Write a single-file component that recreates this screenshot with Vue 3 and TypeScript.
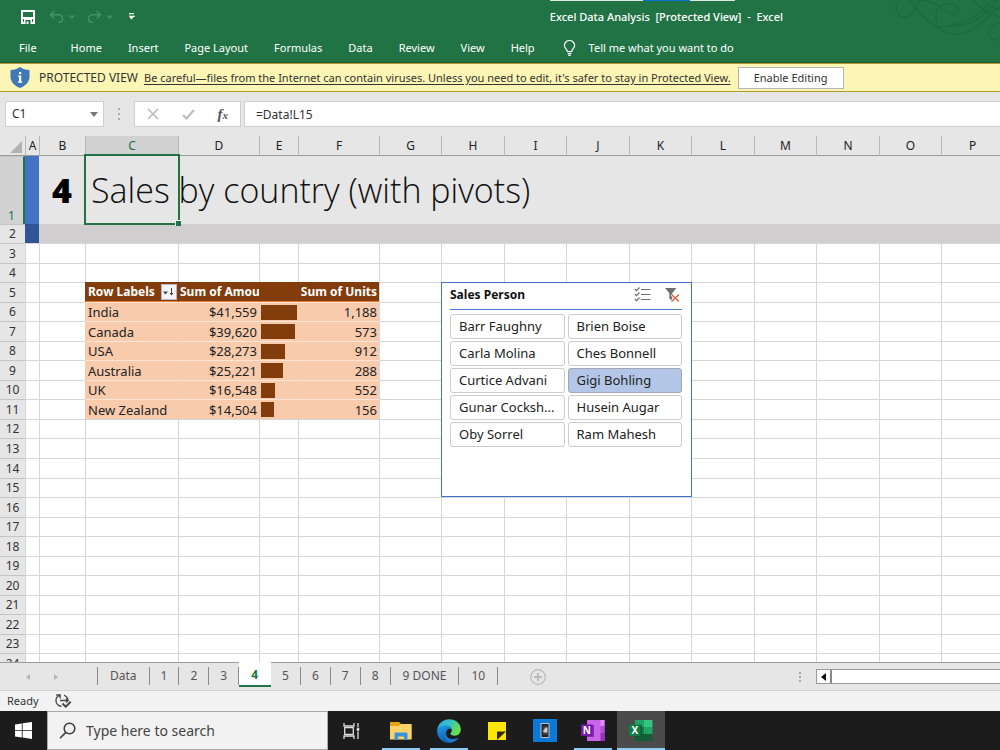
<script setup lang="ts">
import { ref } from 'vue'

interface Column { id: string; width: number }
interface PivotRow { country: string; amount: number; units: number }

const menus: string[] = ['File', 'Home', 'Insert', 'Page Layout', 'Formulas', 'Data', 'Review', 'View', 'Help']

const columns: Column[] = [
  { id: 'A', width: 14 }, { id: 'B', width: 46 }, { id: 'C', width: 93 }, { id: 'D', width: 81 },
  { id: 'E', width: 39 }, { id: 'F', width: 81 }, { id: 'G', width: 62 }, { id: 'H', width: 63 },
  { id: 'I', width: 62 }, { id: 'J', width: 63 }, { id: 'K', width: 62 }, { id: 'L', width: 63 },
  { id: 'M', width: 62 }, { id: 'N', width: 63 }, { id: 'O', width: 62 }, { id: 'P', width: 63 },
]
const sheetWidth = columns.reduce((sum, c) => sum + c.width, 25)

const pivot: PivotRow[] = [
  { country: 'India', amount: 41559, units: 1188 },
  { country: 'Canada', amount: 39620, units: 573 },
  { country: 'USA', amount: 28273, units: 912 },
  { country: 'Australia', amount: 25221, units: 288 },
  { country: 'UK', amount: 16548, units: 552 },
  { country: 'New Zealand', amount: 14504, units: 156 },
]
const topAmount = Math.max(...pivot.map((r) => r.amount))

const FIRST_PIVOT_ROW = 6
const rows: number[] = Array.from({ length: 24 }, (_, i) => i + 1)

function rowHeight(n: number): number {
  if (n === 1) return 68
  if (n === 2) return 19
  return ((n - 3) % 11) % 2 === 0 ? 20 : 19
}
function pivotAt(n: number): PivotRow | undefined {
  return pivot[n - FIRST_PIVOT_ROW]
}
function cellClass(n: number, id: string): string[] {
  const inPivot = 'CDEF'.includes(id)
  if (n === 5 && inPivot) return ['phead', 'p' + id]
  if (pivotAt(n) && inPivot) return ['pcell', 'p' + id]
  if (n <= 2 && id === 'A') return ['accent']
  return []
}
const fmt = (v: number): string => v.toLocaleString('en-US')

const people: string[] = [
  'Barr Faughny', 'Brien Boise', 'Carla Molina', 'Ches Bonnell', 'Curtice Advani',
  'Gigi Bohling', 'Gunar Cocksh...', 'Husein Augar', 'Oby Sorrel', 'Ram Mahesh',
]
const person = ref('Gigi Bohling')

const sheets: string[] = ['Data', '1', '2', '3', '4', '5', '6', '7', '8', '9 DONE', '10']
const sheet = ref('4')
const formula = ref('=Data!L15')
const search = ref('')
</script>

<template>
  <div class="app">
    <header class="ribbon">
      <svg class="flourish" width="115" height="44" viewBox="0 0 115 44" fill="none" stroke="#1d6a40" stroke-width="1.300" aria-hidden="true">
        <path d="M14 2c-4 3-4 13 3 15 8 2 12-6 18-17M22 0c5 1 8 6 11 10 7 9 20 20 32 24 10 2 20-2 29-9 8-6 14-13 21-19" />
        <path d="M66 15c5 1 8-2 8-5 0-4-5-6-11-6C54 4 51 10 51 15c0 5 1 10 2 12 16-1 30-5 40-13 6-5 10-9 15-14" />
        <path d="M36 0c10 0 16 6 24 11 6 3 12 0 11-4M66 26c12 0 22-3 30-9 6-5 12-11 17-17M88 0c5 7 12 12 27 17M98 0c4 5 9 8 17 10M115 22c-7 2-11 7-11 12 1 7 9 8 10 2" />
      </svg>
      <div class="strip" aria-hidden="true"><i></i></div>
      <div class="titlebar">
        <div class="quick">
          <button class="ic save" aria-label="Save">
            <svg width="14" height="14" viewBox="0 0 14 14"><path d="M1 1h12v12H1z" fill="none" stroke="#fff" stroke-width="2" /><path d="M1 7h12v2H1zM3 9h8v5H3z" fill="#fff" /><path d="M4.500 10h5v4h-5z" fill="#217346" /><path d="M5.500 11.500h2V14h-2z" fill="#fff" /></svg>
          </button>
          <button class="ic undo" aria-label="Undo">
            <svg width="28" height="14" viewBox="0 0 28 14" fill="none" stroke="#478f69" stroke-width="1.600"><path d="M5.500 1L1.500 4.700l4 3.800M2 4.700h7c3 0 4.500 2 4.500 4s-1.500 3.600-4.500 3.800" /><path d="M20.500 5.500l2.300 2.300 2.300-2.300" /></svg>
          </button>
          <button class="ic redo" aria-label="Redo">
            <svg width="28" height="14" viewBox="0 0 28 14" fill="none" stroke="#478f69" stroke-width="1.600"><path d="M9.500 1l4 3.700-4 3.800M13 4.700H6c-3 0-4.500 2-4.500 4s1.500 3.600 4.500 3.800" /><path d="M20.500 5.500l2.300 2.300 2.300-2.300" /></svg>
          </button>
          <button class="ic more" aria-label="Customize Quick Access Toolbar">
            <svg width="7" height="8" viewBox="0 0 7 8" fill="#fff"><path d="M1 0h5v1.200H1zM0 2.800h7v1H3.500zM.8 3.500h5.400L3.500 6.500z" /></svg>
          </button>
        </div>
        <h1>Excel Data Analysis&nbsp; [Protected View]&nbsp; -&nbsp; Excel</h1>
      </div>
      <nav class="menu">
        <button v-for="m in menus" :key="m" :class="{ file: m === 'File' }">{{ m }}</button>
        <button class="tell">
          <svg width="13" height="16" viewBox="0 0 13 16" fill="none" stroke="#fff" stroke-width="1.200"><path d="M4.300 11.500C4.300 9 1.400 8.500 1.400 5.500a5.100 5 0 0 1 10.200 0c0 3-2.900 3.500-2.900 6zM4.600 13.300h3.800M5 15.200h3" /></svg>
          <span>Tell me what you want to do</span>
        </button>
      </nav>
    </header>

    <section class="notice">
      <svg width="20" height="21" viewBox="0 0 20 21"><path d="M10 0c2.500 2 6 3 9.500 3v7c0 5-4.500 9-9.500 11C5 19 .5 15 .5 10V3C4 3 7.500 2 10 0z" fill="#4179b8" /><path d="M9 5h2.200v2.200H9zM8.200 8.500h3v6h1v1.300H8v-1.300h1V9.700h-.8z" fill="#fff" /></svg>
      <span class="cap">PROTECTED VIEW</span>
      <a href="#">Be careful—files from the Internet can contain viruses. Unless you need to edit, it's safer to stay in Protected View.</a>
      <button>Enable Editing</button>
    </section>

    <section class="fbar">
      <button class="namebox" aria-label="Name box">
        <span>C1</span>
        <svg width="8" height="5" viewBox="0 0 8 5"><path d="M0 0h8L4 5z" fill="#777" /></svg>
      </button>
      <svg class="dots" width="3" height="12" viewBox="0 0 3 12" fill="#aaa"><path d="M0 0h2v2H0zM0 5h2v2H0zM0 10h2v2H0z" /></svg>
      <div class="fx">
        <svg width="12" height="12" viewBox="0 0 12 12" fill="none" stroke="#bdbdbd" stroke-width="1.700"><path d="M1 1l10 10M11 1L1 11" /></svg>
        <svg width="13" height="11" viewBox="0 0 13 11" fill="none" stroke="#bdbdbd" stroke-width="2.200"><path d="M1 6l3.500 3.500L12 1" /></svg>
        <span class="fxt">f<small>x</small></span>
      </div>
      <input v-model="formula" class="formula" aria-label="Formula" readonly />
    </section>

    <main class="sheet">
      <table :style="{ minWidth: sheetWidth + 'px' }">
        <colgroup>
          <col :style="{ width: '25px' }" />
          <col v-for="(c, i) in columns" :key="c.id" :style="i < columns.length - 1 ? { width: c.width + 'px' } : {}" />
        </colgroup>
        <thead>
          <tr>
            <th class="corner"><svg width="12" height="12" viewBox="0 0 12 12"><path d="M12 0v12H0z" fill="#b2b2b2" /></svg></th>
            <th v-for="c in columns" :key="c.id" scope="col" :class="{ on: c.id === 'C' }">{{ c.id }}</th>
          </tr>
        </thead>
        <tbody>
          <tr v-for="n in rows" :key="n" :class="'r' + n" :style="{ height: rowHeight(n) + 'px' }">
            <th scope="row" :class="{ on: n === 1 }">{{ n }}</th>
            <td v-for="c in columns" :key="c.id" :class="cellClass(n, c.id)">
              <b v-if="n === 1 && c.id === 'B'" class="num">4</b>
              <div v-else-if="n === 1 && c.id === 'C'" class="anchor big">
                <span class="title">Sales by country (with pivots)</span>
                <i class="select"></i>
              </div>
              <template v-else-if="n === 5">
                <div v-if="c.id === 'C'" class="filter">
                  <span>Row Labels</span>
                  <button aria-label="Sort Row Labels"><svg width="12" height="10" viewBox="0 0 12 10"><path d="M0 4.500h5L2.500 7.500zM8 1h1v5h1.500L8.500 8.500 6.500 6H8z" fill="#444" /></svg></button>
                </div>
                <template v-else-if="c.id === 'D'">Sum of Amount</template>
                <template v-else-if="c.id === 'F'">Sum of Units</template>
                <div v-else-if="c.id === 'H'" class="anchor">
                  <section class="slicer">
                    <header>
                      <h2>Sales Person</h2>
                      <button aria-label="Multi-Select">
                        <svg width="17" height="15" viewBox="0 0 17 15" fill="none" stroke="#6e6e6e" stroke-width="1.200"><path d="M7 2.500h9.500M7 7.500h9.500M7 12.500h9.500M.8 2l1.700 1.700L5.500.5M.8 7l1.700 1.700 3-3.200M.8 12l1.700 1.700 3-3.200" /></svg>
                      </button>
                      <button aria-label="Clear Filter">
                        <svg width="15" height="16" viewBox="0 0 15 16"><path d="M0 1h11.500L7.300 6v8L4.300 11.500V6z" fill="#6e6e6e" /><path d="M6.500 7.500l7.500 7M14 7.500l-7.500 7" stroke="#fff" stroke-width="3" /><path d="M6.500 7.500l7.500 7M14 7.500l-7.500 7" stroke="#e0603f" stroke-width="1.500" /></svg>
                      </button>
                    </header>
                    <div class="people">
                      <button v-for="p in people" :key="p" :class="{ on: p === person }" @click="person = p">{{ p }}</button>
                    </div>
                  </section>
                </div>
              </template>
              <template v-else-if="pivotAt(n)">
                <template v-if="c.id === 'C'">{{ pivotAt(n)!.country }}</template>
                <template v-else-if="c.id === 'D'">${{ fmt(pivotAt(n)!.amount) }}</template>
                <div v-else-if="c.id === 'E'" class="bar" :style="{ width: (pivotAt(n)!.amount / topAmount) * 100 + '%' }"></div>
                <template v-else-if="c.id === 'F'">{{ fmt(pivotAt(n)!.units) }}</template>
              </template>
            </td>
          </tr>
        </tbody>
      </table>
    </main>

    <footer class="tabs">
      <div class="arrows">
        <button aria-label="Previous sheet"><svg width="4" height="6" viewBox="0 0 4 6"><path d="M4 0v6L0 3z" fill="#b5b5b5" /></svg></button>
        <button aria-label="Next sheet"><svg width="4" height="6" viewBox="0 0 4 6"><path d="M0 0v6l4-3z" fill="#b5b5b5" /></svg></button>
      </div>
      <nav>
        <button v-for="s in sheets" :key="s" :class="{ on: s === sheet, wide: s.length > 1 }" @click="sheet = s"><span>{{ s }}</span></button>
      </nav>
      <button class="add" aria-label="New sheet">
        <svg width="16" height="16" viewBox="0 0 16 16" fill="none" stroke="#b9b9b9"><circle cx="8" cy="8" r="7.300" stroke-width="1.200" /><path d="M8 4v8M4 8h8" stroke-width="1.800" /></svg>
      </button>
      <svg class="dots" width="3" height="12" viewBox="0 0 3 12" fill="#aaa"><path d="M0 1h2v2H0zM0 5h2v2H0zM0 9h2v2H0z" /></svg>
      <div class="scroll">
        <button aria-label="Scroll left"><svg width="5" height="8" viewBox="0 0 5 8"><path d="M5 0v8L0 4z" fill="#111" /></svg></button>
        <div></div>
      </div>
    </footer>

    <div class="status">
      <span>Ready</span>
      <svg width="17" height="14" viewBox="0 0 17 14" fill="none" stroke="#4a4a4a" stroke-width="1.400"><path d="M5 1.200C2.500 2 1 4 1 6.500 1 9.500 3.300 12 6.500 12.200M1.200 1h4v3.500M13 5.500C12.500 3.500 11 2 9 1.200M5 6.500h8M11 4.500l2.200 2L11 8.500" /><path d="M7.500 9.500l3.200 3.200 5-5" stroke-width="2" /></svg>
    </div>

    <div class="taskbar">
      <button class="start" aria-label="Start">
        <svg width="17" height="17" viewBox="0 0 17 17" fill="#fff"><path d="M0 2.400l6.800-1V8H0zM7.600 1.300L17 0v8H7.600zM0 8.800h6.800v6.700L0 14.600zM7.600 8.800H17V17l-9.400-1.400z" /></svg>
      </button>
      <label class="search">
        <svg width="17" height="17" viewBox="0 0 17 17" fill="none" stroke="#3c3c3c" stroke-width="1.500"><circle cx="10.500" cy="6.500" r="5.300" /><path d="M6.800 10.400L1 16.200" /></svg>
        <input v-model="search" placeholder="Type here to search" aria-label="Search" />
      </label>
      <button class="app-btn tv" aria-label="Task View">
        <svg width="17" height="16" viewBox="0 0 17 16" fill="none" stroke="#ddd" stroke-width="1.300"><path d="M1 0v3h10V0M1 16v-3h10v3M1.700 4.700h8.600v6.600H1.700zM15 0v16" /><path d="M13.300 4.800h3.400v3.200h-3.400z" fill="#fff" stroke="#1c1c1c" stroke-width=".8" /></svg>
      </button>
      <button class="app-btn run" aria-label="File Explorer">
        <svg width="22" height="18" viewBox="0 0 22 18"><path d="M0 0h9l2 2h10.500v15H0z" fill="#e8a317" /><path d="M0 4h9l2-2h10.500v15.500H0z" fill="#fbd467" /><path d="M4.500 18v-6c0-1 .6-1.500 1.500-1.500h10c1 0 1.500.5 1.500 1.500v6h-3.600v-3.500H8.100V18z" fill="#3a93dc" /></svg>
      </button>
      <button class="app-btn run" aria-label="Microsoft Edge">
        <svg width="24" height="24" viewBox="0 0 24 24">
          <defs>
            <linearGradient id="eg" x1="0" y1="0" x2="1" y2=".4"><stop offset="0" stop-color="#28a8e8" /><stop offset=".55" stop-color="#35c3c4" /><stop offset="1" stop-color="#6be04b" /></linearGradient>
            <linearGradient id="eb" x1="0" y1="0" x2=".5" y2="1"><stop offset="0" stop-color="#1f9be8" /><stop offset="1" stop-color="#1259ad" /></linearGradient>
          </defs>
          <path d="M.2 11C1 4.500 6 .2 12.300.2 19 .2 23.800 5 23.800 10.500c0 3.600-2.700 6.200-6.200 6.200-2.700 0-4.200-1-4.200-1.900 0-.8 1.400-1.300 1.400-3.300 0-2.500-2.300-4.500-5.300-4.500C5.500 7 2 8.500.2 11z" fill="url(#eg)" />
          <path d="M.2 11C1.800 8 5 6.600 8.500 6.600c3 0 5.500 1.400 6.200 3.700-3-1.500-5.700.8-5.700 4.200 0 5 5.500 7.500 12.500 4.300C19 22 15.800 23.800 12 23.800 5 23.800-.3 18 .2 11z" fill="url(#eb)" />
          <path d="M9.400 11.500C6.500 14 6.500 20.500 12.500 23.700c4-.2 7-2.200 9-4.900-7 3.200-12.500.7-12.500-4.300 0-1.200.2-2.200.4-3z" fill="#1b79cf" />
        </svg>
      </button>
      <button class="app-btn" aria-label="Sticky Notes">
        <svg width="18" height="18" viewBox="0 0 18 18"><path d="M0 0h18v18H0z" fill="#ffe600" /><path d="M9 9.500h9L9 18z" fill="#2b2b1c" /></svg>
      </button>
      <button class="app-btn" aria-label="Your Phone">
        <svg width="24" height="23" viewBox="0 0 24 23"><path d="M0 0h24v23H0z" fill="#0a79d8" /><path d="M8 4.500h8v14H8z" fill="#222" stroke="#b9c4cc" /><path d="M9.500 7h5v9h-5z" fill="#3d3d3d" /><path d="M10 12l2.500-3.500h2v5H11z" fill="#ccc" /></svg>
      </button>
      <button class="app-btn run" aria-label="OneNote">
        <svg width="24" height="21" viewBox="0 0 24 21"><path d="M6 0h17.500v21H6z" fill="#ca64ea" /><path d="M19.500 0h4v6h-4z" fill="#d98cf2" /><path d="M19.500 6h4v7h-4z" fill="#b24fd6" /><path d="M19.500 13h4v8h-4z" fill="#9332bf" /><path d="M6 5h7v12H6z" fill="#8a2cb0" /><path d="M0 4.500h11.500V16H0z" fill="#7719aa" /><text x="5.800" y="13.800">N</text></svg>
      </button>
      <button class="app-btn run active" aria-label="Excel">
        <svg width="24" height="21" viewBox="0 0 24 21"><path d="M6 0h9v7H6z" fill="#21a366" /><path d="M15 0h8.500v7H15z" fill="#33c481" /><path d="M6 7h9v7H6z" fill="#107c41" /><path d="M15 7h8.500v7H15z" fill="#21a366" /><path d="M6 14h17.500v7H6z" fill="#185c37" /><path d="M6 5h7v12H6z" fill="#0d5a2f" /><path d="M0 4.500h11.500V16H0z" fill="#107c41" /><text x="5.800" y="13.800">X</text></svg>
      </button>
    </div>
  </div>
</template>

<style>
body { margin: 0; overflow: hidden; }
</style>

<style scoped>
* { box-sizing: border-box; }
.app {
  display: flex; flex-direction: column; height: 100vh; overflow: hidden;
  font: 12px/16px "Noto Sans", "Open Sans", sans-serif; color: #333; background: #e6e6e6;
}
button { font: inherit; color: inherit; background: none; border: 0; padding: 0; margin: 0; }
.app svg { display: block; flex: none; }
a { color: inherit; }

.ribbon { position: relative; flex: none; background: #217346; color: #fff; border-bottom: 1px solid #1b5e39; font-size: 11px; }
.flourish { position: absolute; right: 0; top: 0; }
.strip { position: absolute; left: 550px; top: 0; width: 185px; height: 1px; background: #dfe9e3; }
.strip i { display: block; margin-left: 93px; width: 47px; height: 1px; background: #0f6fd6; }
.titlebar { position: relative; display: flex; align-items: center; justify-content: space-between; height: 34px; padding: 0 217px 0 21px; }
.quick { display: flex; align-items: center; gap: 10px; }
.quick .save { margin-right: 4px; }
.quick .more { margin-left: 3px; }
.titlebar h1 { margin: 0; font-size: 11px; font-weight: 500; white-space: nowrap; }
.menu { position: relative; display: flex; align-items: center; height: 28px; padding-left: 6px; }
.menu button { padding: 0 13px; white-space: nowrap; }
.menu .file { margin-right: 8px; }
.menu .tell { display: flex; align-items: center; gap: 13px; padding-left: 15px; }

.notice {
  flex: none; display: flex; align-items: center; height: 29px; padding-left: 10px; white-space: nowrap;
  background: #fcf6b5; border-top: 1px solid #b59a2e; border-bottom: 1px solid #b59a2e; font-size: 11px;
}
.notice .cap { margin: 0 6px 0 9px; font-size: 12px; }
.notice a { text-underline-offset: 2px; }
.notice button { margin-left: 7px; width: 106px; height: 22px; background: #fff; border: 1px solid #b5b5b5; }

.fbar { flex: none; display: flex; align-items: center; height: 44px; padding-left: 5px; }
.namebox { display: flex; align-items: center; justify-content: space-between; width: 99px; height: 26px; padding: 0 5px 0 6px; background: #fff; border: 1px solid #cfcfcf; }
.fbar .dots { margin: 0 13px 0 14px; }
.fx { display: flex; align-items: center; justify-content: space-between; width: 107px; height: 26px; padding: 0 12px; background: #fff; border: 1px solid #cfcfcf; }
.fxt { font: italic bold 15px/18px "Liberation Serif", serif; color: #555; }
.fxt small { font-size: 11px; }
.formula { flex: 1; min-width: 0; height: 26px; margin-left: 3px; padding: 0 0 0 11px; font: inherit; color: #333; background: #fff; border: 1px solid #cfcfcf; border-right: 0; border-radius: 0; outline: 0; }

.sheet { flex: 1; min-height: 0; overflow: hidden; background: #fff; }
table { width: 100%; table-layout: fixed; border-collapse: separate; border-spacing: 0; font-size: 13px; line-height: 16px; }
td, th { padding: 0; overflow: visible; white-space: nowrap; }
td { border-left: 1px solid #d6d6d6; border-top: 1px solid #d6d6d6; }
thead tr { height: 20px; }
thead th { background: #e6e6e6; border-left: 1px solid #b8b8b8; border-bottom: 1px solid #9b9b9b; font-size: 12px; font-weight: 400; color: #222; }
thead th.corner { border-left: 0; }
thead th:last-child { text-align: left; padding-left: 27px; }
.corner svg { margin: 2px 0 0 10px; }
thead th.on { background: #d2d2d2; color: #217346; }
tbody th { background: #e6e6e6; border-top: 1px solid #c4c4c4; font-size: 12px; font-weight: 400; color: #333; vertical-align: middle; }
tbody th.on { background: #d2d2d2; color: #217346; vertical-align: bottom; border-right: 2px solid #217346; }
.r1 td { background: #e6e6e6; border: 0; }
.r2 td { background: #d0cece; border: 0; }
.r1 td.accent { background: #4472c4; }
.r2 td.accent { background: #305496; }
.num { display: block; text-align: center; font: 900 34px/68px "Noto Sans", "Open Sans", sans-serif; color: #000; }
.anchor { position: relative; height: 18px; }
.big { height: 68px; }
.title { position: relative; display: block; padding-left: 6px; font: 300 34px/68px "Open Sans", "Noto Sans", sans-serif; color: #111; }
.select { position: absolute; inset: -2px -2px -1px -1px; border: 2px solid #217346; }
.select::after { content: ""; position: absolute; right: -3px; bottom: -3px; width: 5px; height: 5px; background: #217346; border-left: 1px solid #fff; border-top: 1px solid #fff; }

.phead, .pcell { overflow: hidden; color: #222; }
.phead { background: #833c0c; border-color: #833c0c; color: #fff; font-size: 12px; font-weight: 700; border-bottom: 1px solid #ed7d31; }
.pcell { background: #f8cbad; border-left-color: #f8cbad; border-top-color: #fce4d6; }
.pC { padding-left: 2px; }
.pD, .pF { text-align: right; padding-right: 2px; }
.phead.pD { text-align: left; padding: 0 0 0 1px; }
.pE { padding: 0 1px; }
.filter { display: flex; justify-content: space-between; align-items: center; height: 17px; }
.filter button { width: 16px; height: 16px; padding: 2px 1px; margin-right: 1px; background: #f4f4f8; border: 1px solid #b8b8c8; }
.bar { height: 15px; background: #833c0c; }

.slicer { position: absolute; left: -1px; top: -2px; width: 251px; height: 215px; padding: 0 9px 0 8px; background: #fff; border: 1px solid #4472c4; z-index: 1; color: #222; }
.slicer header { display: flex; align-items: center; gap: 14px; height: 27px; border-bottom: 1px solid #4a7ad0; padding: 0 2px 2px 0; }
.slicer h2 { flex: 1; margin: 0; font-size: 12px; font-weight: 700; color: #111; }
.people { display: grid; grid-template-columns: 1fr 1fr; gap: 2px 3px; padding-top: 4px; }
.people button { height: 25px; padding: 0 8px; text-align: left; font-size: 13px; background: #fff; border: 1px solid #ccc; border-radius: 3px; white-space: nowrap; }
.people button.on { background: #b4c6e7; border-color: #a0a8b8; }

.tabs { flex: none; display: flex; align-items: center; height: 29px; border-top: 1px solid #9b9b9b; border-bottom: 1px solid #d0d0d0; color: #555; }
.arrows { display: flex; width: 97px; padding-left: 26px; gap: 24px; }
.tabs nav { display: flex; align-self: stretch; }
.tabs nav button { display: flex; align-items: center; padding-bottom: 1px; }
.tabs nav span { padding: 1px 11px; border-right: 1px solid #8a8a8a; }
.tabs nav button:first-child span { border-left: 1px solid #8a8a8a; }
.tabs nav .wide span { padding: 1px 12px; }
.tabs nav .on { margin: -1px 0 3px; padding: 2px 0 0; background: #fff; border-bottom: 2px solid #217346; color: #217346; font-weight: 700; }
.tabs nav .on span { padding: 1px 12px; border-color: transparent; }
.tabs .add { margin-left: 32px; }
.tabs > .dots { margin-left: auto; margin-right: 14px; }
.scroll { display: flex; width: 184px; height: 15px; background: #fff; border: 1px solid #999; border-right: 0; }
.scroll button { width: 15px; padding-left: 4px; border-right: 2px solid #888; }

.status { flex: none; display: flex; align-items: center; gap: 16px; height: 20px; padding-left: 7px; background: #f2f2f2; font-size: 11px; }
.taskbar { flex: none; display: flex; height: 39px; background: #1c1c1c; }
.start { width: 47px; padding-left: 15px; }
.search { display: flex; align-items: center; gap: 10px; width: 281px; padding: 0 11px; background: #f2f2f2; border: 1px solid #aaa; }
.search input { flex: 1; min-width: 0; padding: 0; border: 0; background: none; outline: 0; font: 14px/20px "Noto Sans", sans-serif; color: #333; }
.search input::placeholder { color: #444; opacity: 1; }
.app-btn { display: flex; align-items: center; justify-content: center; width: 48px; padding-top: 2px; border-bottom: 2px solid transparent; }
.app-btn.tv { width: 49px; padding-right: 2px; }
.run { background: linear-gradient(#8ecbf5, #8ecbf5) center bottom / 38px 2px no-repeat border-box; }
.run.active { background: #4b4b4b; border-bottom-color: #8ecbf5; }
.app-btn text { font: bold 10px "Open Sans", sans-serif; fill: #fff; text-anchor: middle; }
</style>
